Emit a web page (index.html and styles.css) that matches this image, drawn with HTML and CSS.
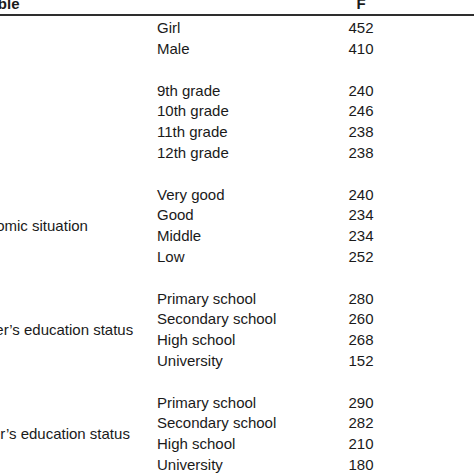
FILE: index.html
```html
<!DOCTYPE html>
<html lang="en">
<head>
<meta charset="utf-8">
<title>Table</title>
<link rel="stylesheet" href="styles.css">
</head>
<body>
<table class="table">
  <thead>
    <tr class="head">
      <th class="c-var">Variable</th>
      <th class="c-sub"></th>
      <th class="c-num">F</th>
      <th class="c-rest"></th>
    </tr>
  </thead>
  <tbody>
    <tr class="first"><td class="c-var" rowspan="2">Sex</td><td class="c-sub">Girl</td><td class="c-num">452</td><td></td></tr>
    <tr><td class="c-sub">Male</td><td class="c-num">410</td><td></td></tr>
    <tr class="gap"><td colspan="4"></td></tr>
    <tr><td class="c-var" rowspan="4">Class</td><td class="c-sub">9th grade</td><td class="c-num">240</td><td></td></tr>
    <tr><td class="c-sub">10th grade</td><td class="c-num">246</td><td></td></tr>
    <tr><td class="c-sub">11th grade</td><td class="c-num">238</td><td></td></tr>
    <tr><td class="c-sub">12th grade</td><td class="c-num">238</td><td></td></tr>
    <tr class="gap"><td colspan="4"></td></tr>
    <tr><td class="c-var" rowspan="4">Economic situation</td><td class="c-sub">Very good</td><td class="c-num">240</td><td></td></tr>
    <tr><td class="c-sub">Good</td><td class="c-num">234</td><td></td></tr>
    <tr><td class="c-sub">Middle</td><td class="c-num">234</td><td></td></tr>
    <tr><td class="c-sub">Low</td><td class="c-num">252</td><td></td></tr>
    <tr class="gap"><td colspan="4"></td></tr>
    <tr><td class="c-var" rowspan="4">Mother’s education status</td><td class="c-sub">Primary school</td><td class="c-num">280</td><td></td></tr>
    <tr><td class="c-sub">Secondary school</td><td class="c-num">260</td><td></td></tr>
    <tr><td class="c-sub">High school</td><td class="c-num">268</td><td></td></tr>
    <tr><td class="c-sub">University</td><td class="c-num">152</td><td></td></tr>
    <tr class="gap"><td colspan="4"></td></tr>
    <tr><td class="c-var" rowspan="4">Father’s education status</td><td class="c-sub">Primary school</td><td class="c-num">290</td><td></td></tr>
    <tr><td class="c-sub">Secondary school</td><td class="c-num">282</td><td></td></tr>
    <tr><td class="c-sub">High school</td><td class="c-num">210</td><td></td></tr>
    <tr><td class="c-sub">University</td><td class="c-num">180</td><td></td></tr>
  </tbody>
</table>
</body>
</html>
```

FILE: styles.css
```css
html, body {
  margin: 0;
  padding: 0;
  overflow: hidden;
  background: #ffffff;
}
body {
  font-family: "Liberation Sans", Arial, sans-serif;
  font-size: 15px;
  line-height: 20.8px;
  color: #1a1a1a;
}
.table {
  margin-left: -38px;
  margin-top: -6.5px;
  width: calc(100% + 38px);
  border-collapse: collapse;
  border-spacing: 0;
  table-layout: fixed;
}
.table th,
.table td {
  padding: 0;
  height: 20.8px;
  white-space: nowrap;
  vertical-align: middle;
  font-weight: normal;
}
.head th {
  font-weight: bold;
  text-align: left;
  border-bottom: 2px solid #2e2e2e;
}
.head th.c-num {
  text-align: center;
}
.first td {
  padding-top: 2px;
}
.c-var {
  width: 195px;
  text-align: left;
}
.c-sub {
  width: 143px;
  text-align: left;
}
.c-num {
  width: 122px;
  text-align: center;
}
```
